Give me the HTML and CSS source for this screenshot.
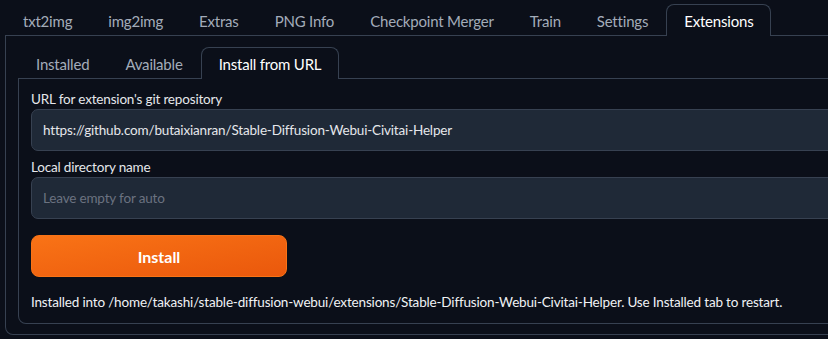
FILE: index.html
```html
<!DOCTYPE html>
<html lang="en">
<head>
    <meta charset="UTF-8">
    <title>Extensions - Install from URL</title>
    <link rel="stylesheet" href="styles.css">
</head>
<body>
    <div class="app">
        <nav class="tab-nav">
            <button class="tab">txt2img</button>
            <button class="tab">img2img</button>
            <button class="tab">Extras</button>
            <button class="tab">PNG Info</button>
            <button class="tab">Checkpoint Merger</button>
            <button class="tab">Train</button>
            <button class="tab">Settings</button>
            <button class="tab selected">Extensions</button>
        </nav>

        <div class="tab-panel">
            <nav class="tab-nav">
                <button class="tab">Installed</button>
                <button class="tab">Available</button>
                <button class="tab selected">Install from URL</button>
            </nav>

            <div class="tab-panel inner">
                <label class="field">
                    <span class="field-label">URL for extension's git repository</span>
                    <input class="textbox" type="text" value="https://github.com/butaixianran/Stable-Diffusion-Webui-Civitai-Helper">
                </label>

                <label class="field">
                    <span class="field-label">Local directory name</span>
                    <input class="textbox" type="text" placeholder="Leave empty for auto">
                </label>

                <button class="install-btn">Install</button>

                <div class="result">Installed into /home/takashi/stable-diffusion-webui/extensions/Stable-Diffusion-Webui-Civitai-Helper. Use Installed tab to restart.</div>
            </div>
        </div>
    </div>
</body>
</html>
```

FILE: styles.css
```css
body {
    margin: 0;
    background: #0b0f19;
    font-family: 'Lato', 'Liberation Sans', sans-serif;
    color: #e5e7eb;
    overflow: hidden;
}

.app {
    width: 880px;
    padding: 4px 0 0 5px;
}

.tab-nav {
    display: flex;
    border-bottom: 1px solid #374151;
}

.tab {
    background: none;
    border: 1px solid transparent;
    border-bottom: none;
    border-radius: 8px 8px 0 0;
    color: #a3acb9;
    font-family: inherit;
    font-size: 15px;
    letter-spacing: -0.2px;
    height: 32px;
    padding: 0 17px;
    margin-bottom: -1px;
    cursor: pointer;
}

.tab.selected {
    color: #ffffff;
    border-color: #374151;
    background: #0b0f19;
    position: relative;
}

.tab-panel {
    border: 1px solid #374151;
    border-top: none;
    border-radius: 0 0 8px 8px;
    padding: 11px 12px 10px;
}

.tab-panel.inner {
    padding: 11px 12px 11px;
}

.field {
    display: block;
    margin-bottom: 7px;
}

.field-label {
    display: block;
    font-size: 13.5px;
    letter-spacing: -0.17px;
    line-height: 19px;
    color: #e5e7eb;
}

.textbox {
    box-sizing: border-box;
    width: 100%;
    height: 42px;
    background: #1f2937;
    border: 1px solid #374151;
    border-radius: 7px;
    color: #e5e7eb;
    font-family: inherit;
    font-size: 13.5px;
    letter-spacing: -0.17px;
    padding: 0 11px;
    outline: none;
}

.textbox::placeholder {
    color: #6b7280;
}

.install-btn {
    display: block;
    width: 256px;
    height: 42px;
    margin-top: 16px;
    border: 1px solid #f97316;
    border-radius: 8px;
    background: linear-gradient(to bottom right, #f97316, #ea580c);
    color: #ffffff;
    font-family: inherit;
    font-size: 16px;
    font-weight: bold;
    cursor: pointer;
}

.result {
    margin-top: 16px;
    font-size: 13.5px;
    letter-spacing: -0.17px;
    line-height: 19px;
    color: #f0f2f5;
}
```
